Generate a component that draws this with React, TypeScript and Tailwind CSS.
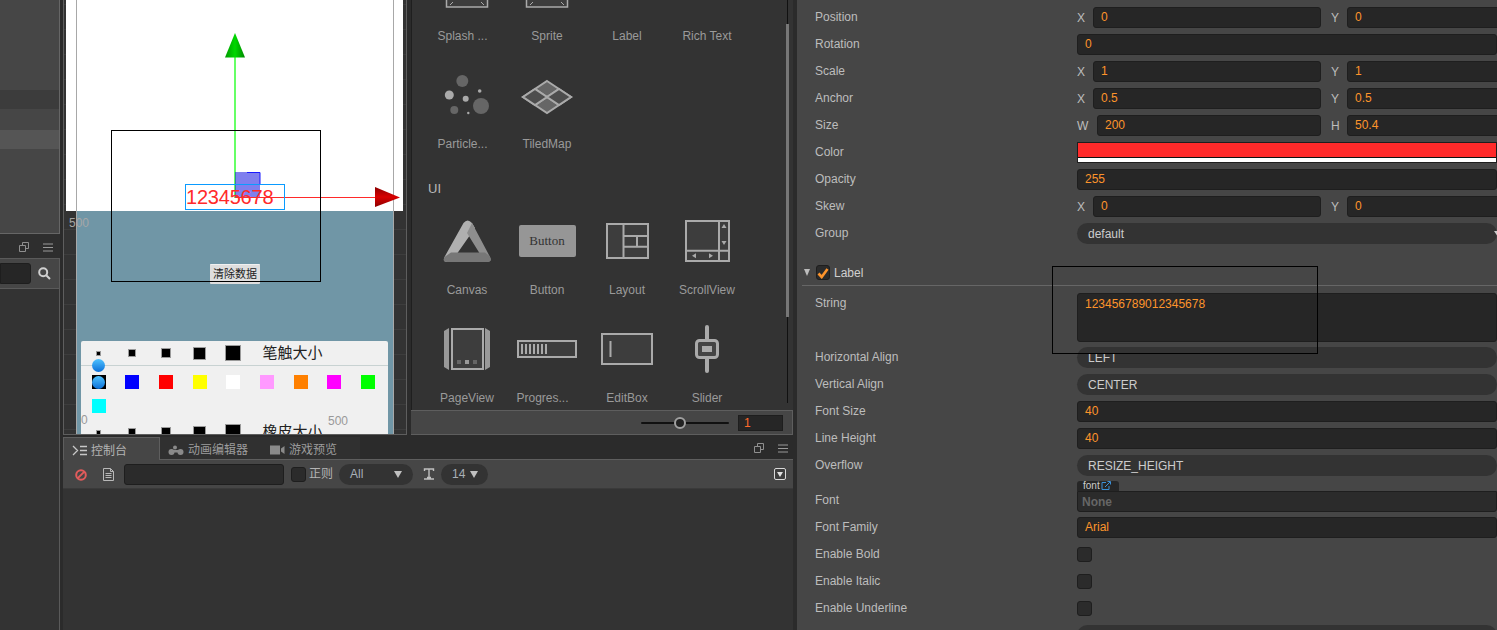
import React from "react";

const sans = "font-['Liberation_Sans','Noto_Sans_CJK_SC',sans-serif]";

function InputBox({ value, className = "" }: { value: string; className?: string }) {
  return (
    <div className={`h-[21px] bg-[#262626] border border-[#1e1e1e] rounded-[3px] pl-[7px] leading-[19px] text-[#fd942b] ${className}`}>
      {value}
    </div>
  );
}

function Pill({ value, arrow }: { value: string; arrow?: boolean }) {
  return (
    <div className="relative h-[21px] w-[500px] bg-[#333333] rounded-full pl-[11px] leading-[23px] text-[#cccccc]">
      {value}
      {arrow && <span className="absolute left-[417px] top-[8px] w-0 h-0 border-x-[4px] border-x-transparent border-t-[6px] border-t-[#cccccc]" />}
    </div>
  );
}

function Row({ label, children }: { label: string; children: React.ReactNode }) {
  return (
    <div className="h-[27px] flex items-center">
      <div className="w-[262px] shrink-0 pb-[2px] text-[#bdbdbd]">{label}</div>
      {children}
    </div>
  );
}

function Pair({ a, av, b, bv, wide }: { a: string; av: string; b: string; bv: string; wide?: boolean }) {
  return (
    <div className="flex items-center text-[#bdbdbd]">
      <span className={wide ? "w-[20px]" : "w-[16px]"}>{a}</span>
      <InputBox value={av} className={wide ? "w-[224px]" : "w-[228px]"} />
      <span className="w-[16px] ml-[10px]">{b}</span>
      <InputBox value={bv} className="w-[300px]" />
    </div>
  );
}

function Check() {
  return <div className="w-[15px] h-[15px] bg-[#2b2b2b] border border-[#1e1e1e] rounded-[3px]" />;
}

function Inspector() {
  return (
    <div className={`relative flex-1 min-w-0 bg-[#464646] overflow-hidden pt-[4px] pl-[18px] text-[12px] ${sans}`}>
      <Row label="Position"><Pair a="X" av="0" b="Y" bv="0" /></Row>
      <Row label="Rotation"><InputBox value="0" className="w-[500px]" /></Row>
      <Row label="Scale"><Pair a="X" av="1" b="Y" bv="1" /></Row>
      <Row label="Anchor"><Pair a="X" av="0.5" b="Y" bv="0.5" /></Row>
      <Row label="Size"><Pair a="W" av="200" b="H" bv="50.4" wide /></Row>
      <Row label="Color">
        <div className="w-[500px] h-[21px] border border-[#1e1e1e] bg-white flex flex-col">
          <div className="h-[14px] bg-[#ff2a2a] border-b border-[#111111] box-content" />
        </div>
      </Row>
      <Row label="Opacity"><InputBox value="255" className="w-[500px]" /></Row>
      <Row label="Skew"><Pair a="X" av="0" b="Y" bv="0" /></Row>
      <Row label="Group"><Pill value="default" arrow /></Row>

      <div className="ml-[-13px] mt-[12px] h-[27px] border-b border-[#666666] flex items-start">
        <span className="ml-[2px] mt-[10px] w-0 h-0 border-x-[3.5px] border-x-transparent border-t-[7px] border-t-[#bdbdbd]" />
        <div className="ml-[6px] mt-[6px] w-[14px] h-[15px] bg-[#2b2b2b] border border-[#1e1e1e] rounded-[3px] flex items-center justify-center">
          <svg width="12" height="12" viewBox="0 0 12 12"><path d="M1.5 6.5 L4.7 10 L10.5 2" fill="none" stroke="#fd942b" strokeWidth="2.6" /></svg>
        </div>
        <span className="ml-[4px] mt-[6px] text-[#d0d0d0] leading-[16px]">Label</span>
      </div>

      <div className="h-[58px] flex items-start pt-[7px]">
        <div className="w-[262px] shrink-0 text-[#bdbdbd] leading-[20px]">String</div>
        <div className="w-[500px] h-[49px] bg-[#262626] border border-[#1e1e1e] rounded-[3px] pl-[7px] pt-[1px] leading-[19px] text-[#fd942b]">123456789012345678</div>
      </div>

      <Row label="Horizontal Align"><Pill value="LEFT" /></Row>
      <Row label="Vertical Align"><Pill value="CENTER" /></Row>
      <Row label="Font Size"><InputBox value="40" className="w-[500px]" /></Row>
      <Row label="Line Height"><InputBox value="40" className="w-[500px]" /></Row>
      <Row label="Overflow"><Pill value="RESIZE_HEIGHT" /></Row>

      <div className="h-[35px] flex items-start">
        <div className="w-[262px] shrink-0 text-[#bdbdbd] mt-[13px] leading-[16px]">Font</div>
        <div className="w-[500px] mt-[2px] flex flex-col items-start">
          <div className="h-[10px] w-[42px] bg-[#262626] rounded-t-[3px] pl-[6px] text-[10px] leading-[9px] text-[#cccccc] flex items-start gap-[1px]">
            font
            <svg width="10" height="9" viewBox="0 0 10 9" fill="none" stroke="#3b8fd6"><path d="M5 1.5H1v7h7V5M4 6l5-5M6.5 .5H9.5V3.5" /></svg>
          </div>
          <div className="w-full h-[21px] bg-[#2b2b2b] border border-[#1e1e1e] rounded-b-[3px] pl-[4px] leading-[20px] font-bold text-[#666666]">None</div>
        </div>
      </div>

      <Row label="Font Family"><InputBox value="Arial" className="w-[500px]" /></Row>
      <Row label="Enable Bold"><Check /></Row>
      <Row label="Enable Italic"><Check /></Row>
      <Row label="Enable Underline"><Check /></Row>
      <Row label=""><Pill value="" /></Row>

      {/* stray selection rectangle from the screenshot tool */}
      <div className="absolute left-[255px] top-[266px] w-[266px] h-[88px] border border-black" />
    </div>
  );
}

function WinIcons() {
  return (
    <div className="flex items-center gap-[14px]">
      <svg width="10" height="10" viewBox="0 0 10 10" fill="none" stroke="#8f8f8f"><path d="M3.5 3V.5h6v6H7M.5 3.5h6v6h-6z" /></svg>
      <svg width="10" height="9" viewBox="0 0 10 9" stroke="#999999"><path d="M0 1h10M0 4.5h10M0 8h10" /></svg>
    </div>
  );
}

function LeftColumn() {
  return (
    <div className="w-[60px] shrink-0 flex flex-col">
      <div className="h-[234px] bg-[#464646] border-r border-b border-[#666666] flex flex-col pt-[90px]">
        <div className="h-[19px] bg-[#3c3c3c]" />
        <div className="h-[21px]" />
        <div className="h-[19px] bg-[#555555]" />
      </div>
      <div className="h-[24px] bg-[#2e2e2e] flex items-center justify-end pr-[7px] pt-[2px]"><WinIcons /></div>
      <div className="h-[31px] bg-[#464646] border-r border-t border-b border-[#5a5a5a] flex items-center">
        <div className="w-[31px] h-[21px] bg-[#262626] border border-[#1e1e1e] rounded-r-[3px]" />
        <svg className="ml-[7px]" width="13" height="13" viewBox="0 0 13 13" fill="none" stroke="#d0d0d0" strokeWidth="2"><circle cx="5.2" cy="5.2" r="4" /><path d="M8.2 8.2L12 12" /></svg>
      </div>
      <div className="flex-1 bg-[#333333] border-r border-[#5a5a5a]" />
    </div>
  );
}

const brushSizes = [5, 8, 10, 13, 16];
const colors = ["bg-black", "bg-[#0000ff]", "bg-[#ff0000]", "bg-[#ffff00]", "bg-white", "bg-[#ff99ff]", "bg-[#ff8000]", "bg-[#ff00ff]", "bg-[#00ff00]", "bg-[#00ffff]"];

function SizeRow({ label, border }: { label: string; border?: boolean }) {
  return (
    <div className={`h-[24px] flex items-center shrink-0 ${border ? "border-b border-[#c8d2d2] box-content" : ""}`}>
      <div className="w-[168.5px] ml-[0.5px] grid grid-cols-5 items-center">
        {brushSizes.map((s, i) => (
          <div key={i} className="flex justify-center items-center">
            <div className="bg-black border border-[#9a9a9a]" style={{ width: s, height: s }} />
          </div>
        ))}
      </div>
      <span className={`ml-[12.5px] text-[15px] text-[#222222] ${sans}`}>{label}</span>
    </div>
  );
}

function Knob({ className }: { className: string }) {
  return <div className={`absolute w-[13px] h-[13px] rounded-full bg-gradient-to-b from-[#4fc3ff] to-[#0a6fd8] ${className}`} />;
}

function GamePanel() {
  return (
    <div className="absolute left-[17px] top-[341px] w-[307px] h-[120px] bg-[#f0f0f0] rounded-t-[2px] flex flex-col">
      <SizeRow label="笔触大小" border />
      <div className="h-[47px] ml-[1px] pt-[9px] grid grid-cols-9 auto-rows-[24px] w-[303px] shrink-0">
        {colors.map((c, i) => (
          <div key={i} className="flex justify-center items-start">
            <div className={`w-[14px] h-[14px] ${c}`} />
          </div>
        ))}
      </div>
      <div className="mt-[7px]"><SizeRow label="橡皮大小" /></div>
      <Knob className="left-[10.5px] top-[17.5px]" />
      <Knob className="left-[10.5px] top-[34.5px]" />
    </div>
  );
}

function Gizmo() {
  return (
    <svg className="absolute left-0 top-0" width="341" height="300" viewBox="0 0 341 300">
      <defs>
        <linearGradient id="g" x1="0" x2="1" y1="0" y2="0"><stop offset="0" stopColor="#009a00" /><stop offset="0.5" stopColor="#00d800" /><stop offset="1" stopColor="#008800" /></linearGradient>
        <linearGradient id="r" x1="0" x2="0" y1="0" y2="1"><stop offset="0" stopColor="#8c0000" /><stop offset="0.5" stopColor="#d80000" /><stop offset="1" stopColor="#8c0000" /></linearGradient>
      </defs>
      <path d="M171 57V198" stroke="#66ff66" strokeWidth="2" />
      <path d="M161 57.5L171 33L181 57.5Z" fill="url(#g)" />
      <path d="M171 197.5H312" stroke="#ff2a2a" strokeWidth="1" />
      <path d="M311 187L336 197.5L311 207Z" fill="url(#r)" />
      <rect x="171" y="172" width="25" height="25" fill="#0000dd" fillOpacity="0.5" />
      <path d="M183 172.5H196V185" fill="none" stroke="#1a1aff" />
    </svg>
  );
}

function SceneView() {
  return (
    <div className="relative w-[344px] h-full shrink-0 overflow-hidden bg-[#333333] bg-[linear-gradient(#3d3d3d_1px,transparent_1px)] bg-[length:25px_25px] bg-[position:0_4px] border-x border-b border-[#5e5e5e]">
      <div className="absolute left-[2px] top-0 w-[337px] h-[211px] bg-white" />
      <div className="absolute left-[12px] top-0 w-[317.5px] h-[435px] border-x border-[#a8a8a8]" />
      <div className="absolute left-[13px] top-[211px] w-[316px] h-[224px] bg-[#7096a6]" />
      <span className={`absolute left-[5px] top-[216px] text-[12px] leading-[14px] text-[#a6a6a6] ${sans}`}>500</span>
      <GamePanel />
      <span className={`absolute left-[17px] top-[413px] text-[12px] leading-[14px] text-[#999999] ${sans}`}>0</span>
      <span className={`absolute left-[264px] top-[414px] text-[12px] leading-[14px] text-[#999999] ${sans}`}>500</span>
      <Gizmo />
      <div className="absolute left-[121px] top-[184px] w-[100px] h-[26px] border border-[#0a9bff]" />
      <span className={`absolute left-[122px] top-[186px] text-[20px] tracking-[-0.2px] leading-[23px] text-[#ff2a2a] ${sans}`}>12345678</span>
      <div className={`absolute left-[146px] top-[264px] w-[50px] h-[20px] bg-[#dedede] border-t border-[#f0f0f0] rounded-[1px] text-[11px] leading-[19px] text-center text-[#222222] ${sans}`}>清除数据</div>
      <div className="absolute left-[47px] top-[130px] w-[210px] h-[152px] border border-black" />
    </div>
  );
}

// component library icons, drawn in an 80x66 box
const ic = "#aaaaaa";

function CornerSprite() {
  return (
    <svg width="80" height="66" viewBox="0 0 80 66" fill="none">
      <rect x="19.5" y="18" width="41" height="35" stroke={ic} strokeWidth="1.5" fill="#3d3d3d" />
      <path d="M23 51l3-3M57 51l-3-3" stroke={ic} />
    </svg>
  );
}

const icons: Record<string, React.ReactNode> = {
  particle: (
    <svg width="80" height="66" viewBox="0 0 80 66">
      <circle cx="35.3" cy="19" r="6" fill="#666666" />
      <circle cx="22.3" cy="33" r="4.5" fill={ic} />
      <circle cx="52.7" cy="29" r="1.8" fill={ic} />
      <circle cx="38.7" cy="36.7" r="3" fill={ic} />
      <circle cx="54" cy="44" r="8" fill="#666666" />
      <circle cx="27.3" cy="48" r="4" fill="#666666" />
      <circle cx="41.3" cy="51" r="1.2" fill={ic} />
    </svg>
  ),
  tiled: (
    <svg width="80" height="66" viewBox="0 0 80 66">
      <path d="M40 19L64 35L40 51L16 35Z" fill="#666666" stroke={ic} strokeWidth="2" />
      <path d="M28 27L52 43M52 27L28 43" stroke={ic} strokeWidth="2" />
      <path d="M28 27L16 35L28 43L40 35Z" fill="#4d4d4d" stroke={ic} strokeWidth="2" />
      <path d="M52 27L64 35L52 43L40 35Z" fill="#4d4d4d" stroke={ic} strokeWidth="2" />
    </svg>
  ),
  canvas: (
    <svg width="80" height="66" viewBox="0 0 80 66">
      <path d="M36.5 15Q40.5 10 45 15L48 20L30.5 45L24.5 54H20Q15.5 54 17.5 49Z" fill="#b0b0b0" />
      <path d="M45 15L62.5 48Q66 54 60 54L58 54L40 25Z" fill="#8e8e8e" />
      <path d="M20 54Q15 54 17.5 49L24 44.5H58L62.5 48Q66 54 60 54Z" fill="#777777" />
    </svg>
  ),
  button: (
    <div className="w-[57px] h-[32px] bg-[#969696] rounded-[2px] flex items-center justify-center font-['Liberation_Serif',serif] text-[13px] text-[#333333]">Button</div>
  ),
  layout: (
    <svg width="80" height="66" viewBox="0 0 80 66" fill="#3d3d3d" stroke={ic} strokeWidth="2">
      <rect x="20" y="16" width="41" height="34" />
      <path d="M36.5 16V50M36.5 28H61M36.5 38.7H61M50 28V38.7" fill="none" />
    </svg>
  ),
  scroll: (
    <svg width="80" height="66" viewBox="0 0 80 66" fill="#3d3d3d" stroke={ic} strokeWidth="2">
      <rect x="19" y="13" width="43" height="40" />
      <path d="M52 13V53M19 42.7H62" fill="none" />
      <path d="M57 16l2.5 4h-5zM57 37l2.5-4h-5zM25 47.8l4-2.5v5zM46 47.8l-4-2.5v5z" fill={ic} stroke="none" />
    </svg>
  ),
  page: (
    <svg width="80" height="66" viewBox="0 0 80 66">
      <path d="M17 15L22 12V54L17 51Z" fill="#999999" />
      <path d="M63 15L58 12V54L63 51Z" fill="#999999" />
      <rect x="25" y="13" width="31" height="40" fill="#3d3d3d" stroke={ic} strokeWidth="2" />
      <rect x="30" y="44" width="4" height="4" fill="#666666" />
      <rect x="38" y="44" width="4" height="4" fill="#999999" />
      <rect x="46" y="44" width="4" height="4" fill="#666666" />
    </svg>
  ),
  progress: (
    <svg width="80" height="66" viewBox="0 0 80 66">
      <rect x="11" y="25" width="58" height="16" fill="#3d3d3d" stroke={ic} strokeWidth="2" />
      <path d="M15 28v10M19 28v10M23 28v10M27 28v10M31 28v10M35 28v10M39 28v10" stroke={ic} strokeWidth="2" />
    </svg>
  ),
  edit: (
    <svg width="80" height="66" viewBox="0 0 80 66">
      <rect x="15" y="18" width="50" height="30" fill="#3d3d3d" stroke={ic} strokeWidth="2" />
      <path d="M23.5 25V41" stroke={ic} strokeWidth="2" />
    </svg>
  ),
  slider: (
    <svg width="80" height="66" viewBox="0 0 80 66">
      <rect x="38" y="9" width="4" height="48" rx="2" fill={ic} />
      <rect x="29.5" y="24.5" width="21" height="17" rx="3" fill="#444444" stroke={ic} strokeWidth="3" />
      <rect x="35" y="30" width="10" height="6" fill={ic} />
    </svg>
  ),
};

function Tile({ label, icon, cut }: { label: string; icon?: React.ReactNode; cut?: boolean }) {
  return (
    <div className="w-[80px] h-[108px] flex flex-col items-center">
      <div className="h-[66px] w-[80px] flex items-center justify-center shrink-0">{icon}</div>
      <div className={`mt-[8px] text-[12px] leading-[16px] text-[#9a9a9a] whitespace-nowrap ${cut ? "pr-[9px]" : ""}`}>{label}</div>
    </div>
  );
}

function Library() {
  return (
    <div className={`flex-1 min-w-0 ml-[4px] flex flex-col ${sans}`}>
      <div className="relative h-[410px] bg-[#333333] border-l border-[#1f1f1f] overflow-hidden">
        <div className="mt-[-46px] pl-[15px] w-[335px]">
          <div className="grid grid-cols-4">
            <Tile label="Splash ..." icon={<CornerSprite />} cut />
            <Tile label="Sprite" icon={<CornerSprite />} />
            <Tile label="Label" />
            <Tile label="Rich Text" />
            <Tile label="Particle..." icon={icons.particle} cut />
            <Tile label="TiledMap" icon={icons.tiled} />
          </div>
          <div className="h-[38px] pl-[1px] pt-[11px] text-[13px] leading-[16px] text-[#b8b8b8]">UI</div>
          <div className="grid grid-cols-4">
            <Tile label="Canvas" icon={icons.canvas} />
            <Tile label="Button" icon={icons.button} />
            <Tile label="Layout" icon={icons.layout} />
            <Tile label="ScrollView" icon={icons.scroll} />
            <Tile label="PageView" icon={icons.page} />
            <Tile label="Progres..." icon={icons.progress} cut />
            <Tile label="EditBox" icon={icons.edit} />
            <Tile label="Slider" icon={icons.slider} />
          </div>
        </div>
        {/* scrollbar */}
        <div className="absolute left-[375px] top-0 h-[403px] w-px bg-[#111111]" />
        <div className="absolute left-[374px] top-[24px] h-[293px] w-[3px] bg-[#777777]" />
      </div>
      <div className="h-[25px] bg-[#464646] border-t border-b border-r border-[#5e5e5e] flex items-center justify-end pr-[9px]">
        <div className="relative w-[88px] h-[2px] bg-[#111111] rounded-full mr-[9px]">
          <div className="absolute left-[33px] top-[-5px] w-[12px] h-[12px] rounded-full bg-[#222222] border-[2px] border-[#a0a0a0]" />
        </div>
        <div className="w-[45px] h-[16px] bg-[#262626] border border-[#1e1e1e] pl-[5px] text-[12px] leading-[15px] text-[#fd6a2b]">1</div>
      </div>
    </div>
  );
}

function Console() {
  return (
    <div className={`flex-1 flex flex-col mt-[2px] ${sans}`}>
      <div className="h-[23px] flex items-stretch bg-[#2b2b2b]">
        <div className="w-[97px] bg-[#464646] border-t border-r border-l border-[#5e5e5e] flex items-center pl-[8px] pt-[3px] gap-[4px] text-[12px] text-[#b4b4b4]">
          <svg width="15" height="11" viewBox="0 0 15 11" fill="none" stroke="#c8c8c8" strokeWidth="1.3"><path d="M1 1L5.5 5.5L1 10M8 1.5h7M8 5.5h7M8 9.5h7" /></svg>
          控制台
        </div>
        <div className="w-[200px] bg-[#303030] border-b border-[#5e5e5e] flex items-center pt-[4px] text-[12px] text-[#9c9c9c]">
          <svg className="ml-[8px]" width="16" height="11" viewBox="0 0 16 11" fill="#8a8a8a"><circle cx="3.5" cy="7" r="3" /><circle cx="12.5" cy="7" r="3" /><circle cx="7" cy="2.5" r="2" /><rect x="3" y="5" width="10" height="2.5" /></svg>
          <span className="ml-[4px]">动画编辑器</span>
          <svg className="ml-[22px]" width="15" height="10" viewBox="0 0 15 10" fill="#8a8a8a"><rect x="0" y="0.5" width="10" height="9" /><path d="M11 3.5L14.5 1V9L11 6.5Z" /></svg>
          <span className="ml-[4px]">游戏预览</span>
        </div>
        <div className="flex-1 border-b border-[#5e5e5e] flex items-center justify-end pr-[5px]"><WinIcons /></div>
      </div>
      <div className="h-[29px] bg-[#464646] border-b border-[#3a3a3a] flex items-center relative text-[12px] text-[#b4b4b4]">
        <svg className="ml-[12px] mt-[1px]" width="12" height="12" viewBox="0 0 12 12" fill="none" stroke="#e25b5b" strokeWidth="2"><circle cx="6" cy="6" r="4.8" /><path d="M2.6 9.4L9.4 2.6" /></svg>
        <svg className="ml-[16px] mt-[1px]" width="11" height="13" viewBox="0 0 11 13" fill="none" stroke="#b8b8b8"><path d="M.5.5h7l3 3v9H.5zM7.5.5v3h3M2.5 5.5h6M2.5 7.5h6M2.5 9.5h6" /></svg>
        <div className="ml-[10px] w-[160px] h-[21px] bg-[#2b2b2b] border border-[#1e1e1e] rounded-[3px]" />
        <div className="ml-[7px]"><Check /></div>
        <span className="ml-[3px]">正则</span>
        <div className="ml-[6px] w-[74px] h-[21px] bg-[#333333] rounded-full flex items-center justify-between pl-[11px] pr-[11px] text-[#a8b0b8]">
          All
          <span className="w-0 h-0 border-x-[4px] border-x-transparent border-t-[7px] border-t-[#c0c0c0]" />
        </div>
        <svg className="ml-[10px]" width="12" height="12" viewBox="0 0 12 12" fill="none" stroke="#c0c0c0" strokeWidth="1.4"><path d="M1.5 3V1h9v2M6 1v8.5M1 11h10M4 9.5h4" /></svg>
        <div className="ml-[6px] w-[47px] h-[21px] bg-[#333333] rounded-full flex items-center justify-between pl-[11px] pr-[10px] text-[#a8b0b8]">
          14
          <span className="w-0 h-0 border-x-[4px] border-x-transparent border-t-[7px] border-t-[#c0c0c0]" />
        </div>
        <div className="absolute right-[7px] top-[8px] w-[12px] h-[12px] border border-[#d8d8d8] rounded-[2px] bg-[#3c3c3c] flex items-center justify-center">
          <span className="w-0 h-0 border-x-[3.5px] border-x-transparent border-t-[5px] border-t-[#e0e0e0]" />
        </div>
      </div>
      <div className="flex-1 bg-[#333333]" />
    </div>
  );
}

export default function App() {
  return (
    <div className="w-[1497px] h-[630px] flex overflow-hidden bg-[#2b2b2b]">
      <LeftColumn />
      <div className="w-[730px] ml-[3px] shrink-0 flex flex-col">
        <div className="h-[435px] flex shrink-0">
          <SceneView />
          <Library />
        </div>
        <Console />
      </div>
      <div className="w-[4px] shrink-0" />
      <Inspector />
    </div>
  );
}
